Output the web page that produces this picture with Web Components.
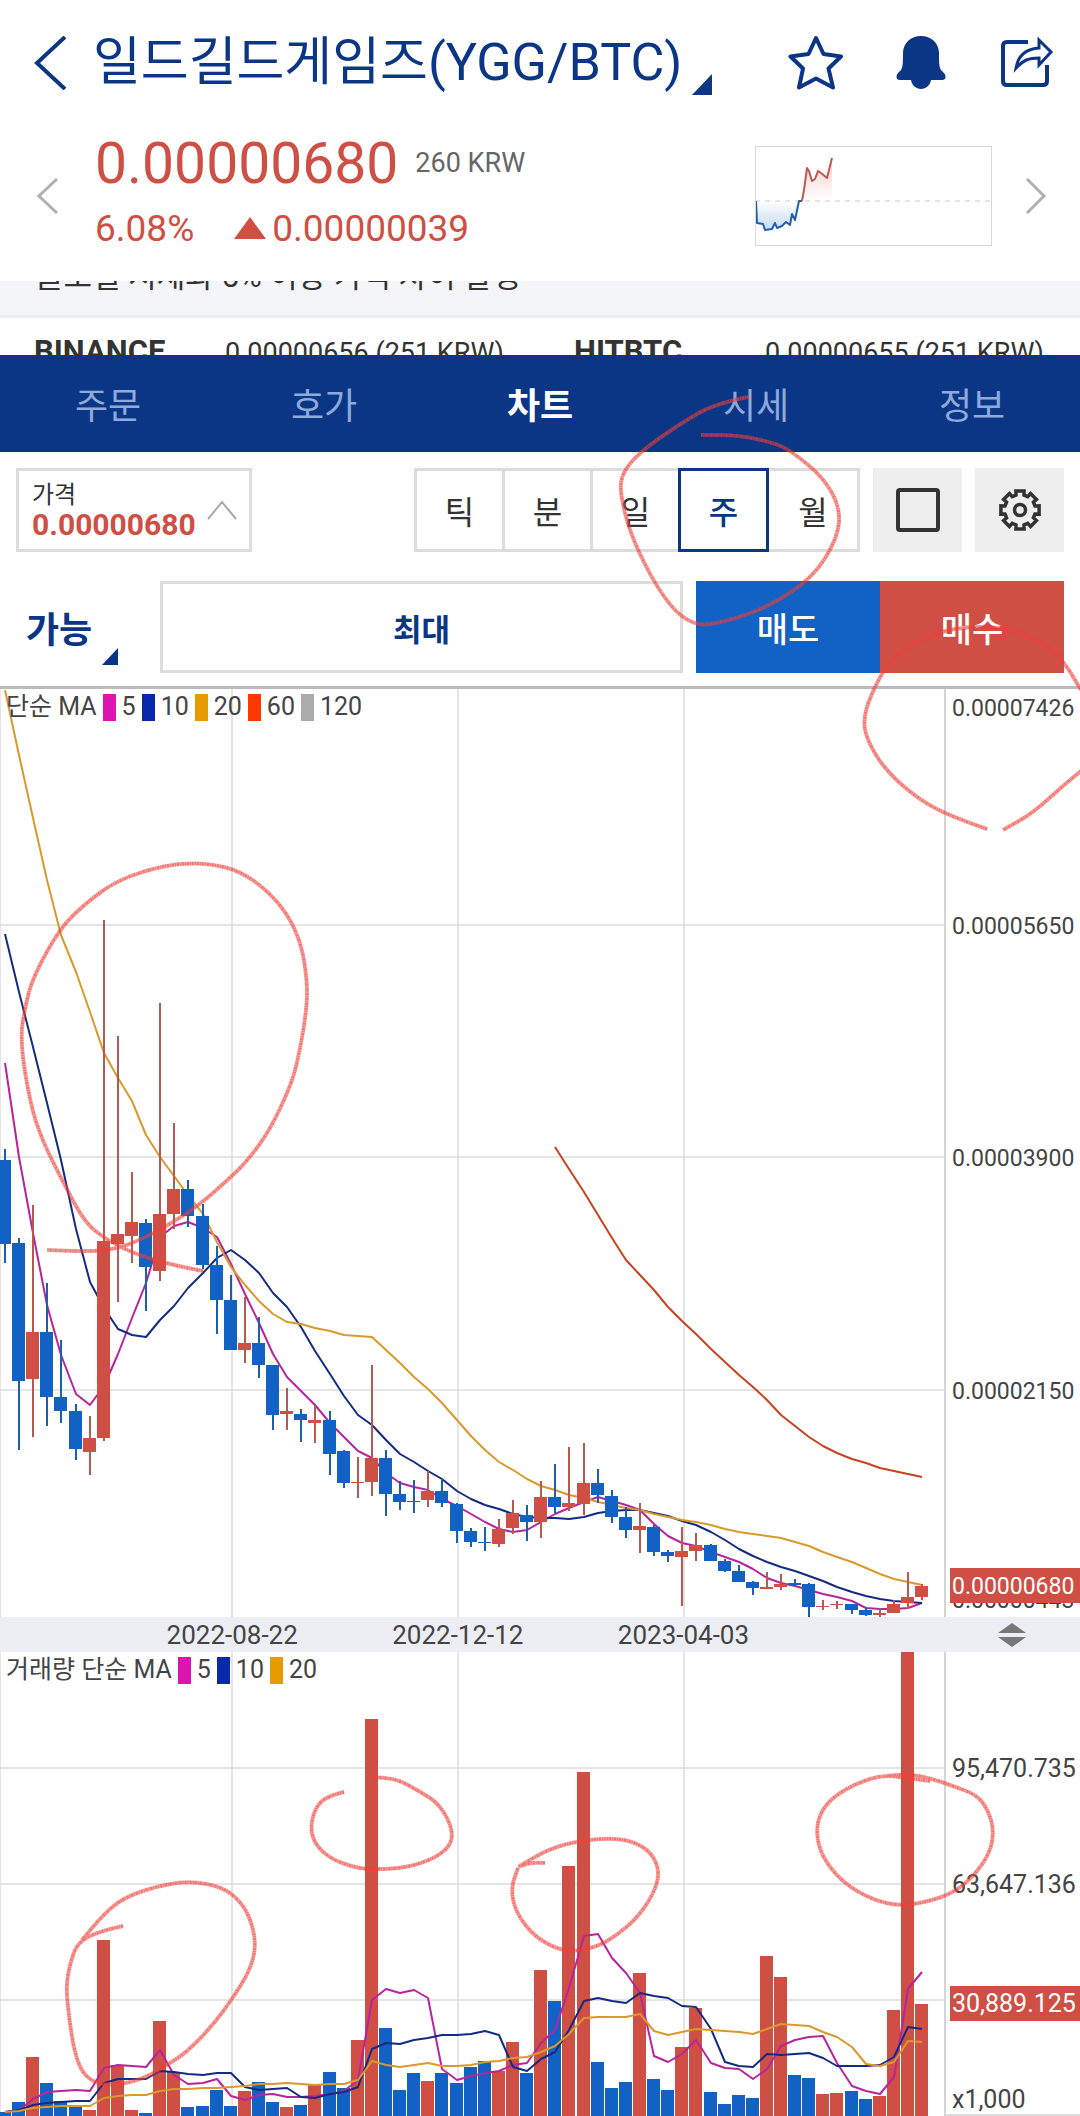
<!DOCTYPE html>
<html lang="ko">
<head>
<meta charset="UTF-8">
<meta name="viewport" content="width=device-width, initial-scale=1.0">
<title>일드길드게임즈(YGG/BTC)</title>
<style>
    body {
        margin: 0;
        background-color: white;
        color: #333;
        font-family: Roboto, "Noto Sans CJK KR", sans-serif;
    }
</style>
</head>
<body>
<coin-page>
    <coin-header>일드길드게임즈(YGG/BTC)</coin-header>
    <price-summary>
        <span slot="price">0.00000680</span>
        <span slot="krw">260 KRW</span>
        <span slot="rate">6.08%</span>
        <span slot="change">0.00000039</span>
    </price-summary>
    <market-strip>
        <span slot="notice">글로벌 시세와 5% 이상 가격 차이 발생</span>
        <market-quote name="BINANCE">0.00000656 (251 KRW)</market-quote>
        <market-quote name="HITBTC">0.00000655 (251 KRW)</market-quote>
    </market-strip>
    <tab-bar>
        <tab-link href="#order">주문</tab-link>
        <tab-link href="#book">호가</tab-link>
        <tab-link href="#chart" active>차트</tab-link>
        <tab-link href="#quote">시세</tab-link>
        <tab-link href="#info">정보</tab-link>
    </tab-bar>
    <chart-toolbar></chart-toolbar>
    <order-bar></order-bar>
    <price-chart></price-chart>
    <date-axis></date-axis>
    <volume-chart></volume-chart>
    <pen-marks></pen-marks>
</coin-page>

<script>
const UP = "#cf4f45";
const DOWN = "#1261c4";
const NAVY = "#0a3685";
const MA5 = "#b8249e";
const MA10 = "#142b82";
const MA20 = "#d99a2b";
const MA60 = "#c9431f";

const BASE_STYLE = `
    * {
        margin: 0;
        padding: 0;
        box-sizing: border-box;
    }

    :host {
        display: block;
    }

    button {
        border: 0;
        background: none;
        color: inherit;
        font: inherit;
        cursor: pointer;
    }

    svg {
        display: block;
    }
`;

function render(element, style, html) {
    element.attachShadow({ mode: "open" });
    element.shadowRoot.innerHTML = `<style>${BASE_STYLE}${style}</style>${html}`;
}

// direction, body top, body bottom, high, low
const candles = [
    ["d", 471, 555, 460, 574], ["d", 554, 692, 549, 761], ["u", 643, 690, 516, 748], ["d", 643, 708, 594, 737],
    ["d", 708, 722, 651, 734], ["d", 722, 760, 715, 771], ["u", 749, 763, 727, 786], ["u", 552, 749, 231, 752],
    ["u", 545, 555, 347, 613], ["u", 533, 547, 483, 574], ["d", 534, 578, 530, 622], ["u", 525, 582, 314, 592],
    ["u", 500, 525, 434, 540], ["d", 500, 527, 491, 538], ["d", 527, 576, 515, 580], ["d", 576, 611, 557, 645],
    ["d", 611, 661, 586, 661], ["u", 654, 661, 608, 674], ["d", 654, 676, 628, 689], ["d", 676, 726, 676, 741],
    ["u", 722, 725, 699, 741], ["d", 725, 731, 720, 753], ["u", 731, 734, 716, 754], ["d", 731, 765, 722, 786],
    ["d", 762, 794, 761, 799], ["u", 793, 794, 768, 809], ["u", 769, 793, 676, 807], ["d", 769, 805, 761, 827],
    ["d", 805, 813, 792, 821], ["d", 812, 813, 791, 824], ["u", 802, 811, 782, 818], ["d", 802, 814, 790, 818],
    ["d", 815, 842, 814, 854], ["d", 842, 853, 839, 858], ["d", 853, 854, 838, 862], ["u", 840, 855, 830, 858],
    ["u", 824, 839, 811, 845], ["d", 826, 833, 816, 852], ["u", 808, 833, 792, 849], ["d", 808, 818, 775, 824],
    ["u", 814, 818, 758, 822], ["u", 794, 815, 754, 826], ["d", 794, 806, 780, 814], ["d", 807, 828, 801, 834],
    ["d", 828, 841, 818, 849], ["u", 837, 841, 814, 864], ["d", 838, 863, 836, 867], ["d", 863, 867, 861, 873],
    ["u", 862, 868, 838, 917], ["u", 856, 862, 844, 872], ["d", 856, 872, 855, 872], ["d", 872, 882, 870, 883],
    ["d", 882, 893, 876, 893], ["d", 893, 899, 892, 906], ["u", 898, 900, 883, 900], ["u", 895, 898, 885, 901],
    ["d", 894, 896, 890, 897], ["d", 895, 918, 894, 928], ["u", 917, 918, 911, 921], ["u", 915, 916, 912, 920],
    ["d", 915, 921, 915, 925], ["d", 921, 926, 918, 927], ["u", 924, 926, 919, 928], ["u", 915, 924, 911, 924],
    ["u", 908, 914, 883, 920], ["u", 897, 908, 895, 911]
];

const volumes = [
    460, 450, 405, 431, 449, 455, 458, 288, 413, 458, 461, 369, 420, 455, 454, 438, 454, 439, 430, 450, 455, 453,
    433, 420, 436, 388, 67, 376, 438, 421, 429, 421, 431, 415, 409, 419, 390, 421, 318, 349, 214, 120, 410, 436,
    430, 321, 427, 438, 395, 356, 440, 452, 443, 446, 304, 325, 423, 426, 442, 441, 439, 447, 444, 358, 0, 352
];

const priceMa5 = [
    374, 468, 544, 616, 666, 705, 716, 697, 665, 629, 594, 548, 537, 533, 539, 548, 575, 605, 634, 665, 688, 702,
    716, 734, 748, 762, 769, 784, 794, 798, 801, 810, 817, 825, 833, 840, 843, 841, 833, 825, 819, 813, 808, 812,
    816, 821, 835, 847, 854, 857, 863, 868, 873, 880, 889, 894, 897, 901, 905, 908, 912, 919, 920, 920, 919, 914
];

const priceMa10 = [
    245, 303, 358, 414, 471, 540, 593, 619, 640, 646, 648, 631, 617, 599, 584, 569, 561, 571, 584, 604, 618, 638,
    662, 685, 707, 726, 736, 751, 765, 773, 782, 790, 802, 810, 816, 820, 825, 828, 829, 829, 830, 828, 824, 822,
    821, 821, 824, 827, 832, 836, 843, 851, 860, 867, 873, 878, 882, 887, 892, 898, 903, 907, 910, 912, 913, 914
];

const priceMa20 = [
    1, 66, 129, 191, 246, 283, 323, 364, 389, 412, 446, 468, 487, 506, 525, 553, 578, 596, 612, 625, 633, 635,
    639, 642, 646, 647, 648, 661, 674, 688, 700, 714, 731, 747, 761, 773, 781, 790, 797, 801, 806, 809, 813, 816,
    819, 821, 825, 828, 831, 833, 836, 840, 843, 845, 847, 849, 853, 857, 863, 868, 873, 879, 885, 890, 893, 896
];

// starts at the 40th week
const priceMa60 = [
    458, 480, 503, 526, 549, 571, 586, 601, 618, 632, 645, 660, 673, 686, 698, 711, 726, 737, 748, 757, 764, 770,
    774, 779, 782, 785, 788
];

const volumeMa5 = [
    460, 458, 447, 440, 439, 438, 439, 416, 413, 414, 415, 398, 423, 432, 431, 427, 444, 448, 443, 442, 445, 445,
    444, 442, 439, 428, 348, 337, 341, 338, 346, 417, 428, 424, 421, 419, 413, 411, 391, 378, 336, 284, 282, 306,
    321, 341, 404, 410, 402, 388, 411, 416, 417, 427, 417, 394, 388, 385, 384, 411, 434, 439, 442, 425, 337, 320
];

const volumeMa10 = [
    460, 458, 453, 451, 450, 449, 449, 431, 427, 427, 427, 419, 420, 422, 423, 421, 421, 435, 438, 437, 436, 445,
    446, 442, 440, 435, 397, 391, 392, 388, 386, 383, 383, 382, 379, 383, 415, 419, 407, 400, 378, 349, 346, 349,
    351, 341, 344, 346, 354, 355, 377, 410, 414, 415, 402, 403, 402, 401, 406, 414, 414, 414, 413, 405, 375, 377
];

const volumeMa20 = [
    460, 459, 456, 455, 454, 454, 454, 446, 444, 443, 443, 439, 437, 437, 436, 436, 435, 434, 432, 432, 431, 432,
    433, 432, 432, 428, 409, 413, 415, 413, 411, 414, 414, 413, 410, 409, 406, 405, 400, 394, 382, 366, 365, 365,
    365, 362, 379, 383, 380, 377, 378, 379, 380, 382, 377, 372, 373, 374, 380, 385, 395, 412, 414, 410, 389, 390
];

const STEP = 14.11;
const weekX = (index) => Math.round(5 + index * STEP);

function line(values, color, start = 0) {
    const points = values.map((y, i) => `${weekX(i + start)},${y}`).join(" ");
    return `<polyline points="${points}" fill="none" stroke="${color}" stroke-width="2" stroke-linejoin="round"/>`;
}

function grid(height, rows) {
    const columns = [232, 458, 684].map((x) => `<path d="M${x} 0V${height}"/>`).join("");
    const lines = rows.map((y) => `<path d="M0 ${y}H944"/>`).join("");
    return `<g stroke="#dcdcdc" stroke-width="1.5"><path d="M0 0V${height}"/>${columns}${lines}</g>`;
}

class CoinPage extends HTMLElement {
    constructor() {
        super();
        render(this, `
            :host {
                position: relative;
                overflow: hidden;
            }
        `, `<main><slot></slot></main>`);
    }
}

class CoinHeader extends HTMLElement {
    constructor() {
        super();
        render(this, `
            header {
                display: flex;
                align-items: center;
                height: 126px;
                padding: 0 26px 0 34px;
                color: ${NAVY};
            }

            .title {
                display: flex;
                align-items: center;
                gap: 10px;
                margin-left: 27px;
                white-space: nowrap;
            }

            h1 {
                font-size: 52px;
                font-weight: 400;
                line-height: 64px;
            }

            .corner {
                align-self: flex-end;
            }

            .icons {
                display: flex;
                gap: 49px;
                margin-left: auto;
            }
        `, `
            <header>
                <button aria-label="뒤로">
                    <svg width="32" height="54" viewBox="0 0 32 54"><path d="M31 1L3 27L31 53" fill="none" stroke="${NAVY}" stroke-width="4"/></svg>
                </button>
                <button class="title">
                    <h1><slot></slot></h1>
                    <svg class="corner" width="20" height="21"><path d="M20 0V21H0Z" fill="${NAVY}"/></svg>
                </button>
                <div class="icons">
                    <button aria-label="관심">
                        <svg width="56" height="56" viewBox="0 0 56 56"><path d="M28 3L35.500 19L53 21.500L40.500 33.500L45 52.500L28 43.500L11 52.500L15 33.500L2.500 21.500L20.500 19Z" fill="none" stroke="${NAVY}" stroke-width="4" stroke-linejoin="round"/></svg>
                    </button>
                    <button aria-label="알림">
                        <svg width="56" height="56" viewBox="0 0 56 56"><path d="M28 1C38 1 46 8 46 18C46 26 46 32 48 35C51 38 52.500 39 52.500 42Q52.500 45 49 45H38C37 50.500 33 54 28 54S19 50.500 18 45H7Q3.500 45 3.500 42C3.500 39 5 38 8 35C10 32 10 26 10 18C10 8 18 1 28 1Z" fill="${NAVY}"/></svg>
                    </button>
                    <button aria-label="공유">
                        <svg width="56" height="56" viewBox="0 0 56 56" fill="none" stroke="${NAVY}" stroke-width="4"><path d="M30 7H9Q5 7 5 11V46Q5 50 9 50H45Q49 50 49 46V30"/><path d="M41 5V13C28 14 20 21 18 33C25 25 31 23 41 23V30L53 17Z" stroke-width="3"/></svg>
                    </button>
                </div>
            </header>
        `);
    }
}

class PriceSummary extends HTMLElement {
    constructor() {
        super();
        render(this, `
            section {
                display: flex;
                align-items: center;
                height: 155px;
                padding: 0 34px 16px 36px;
                color: ${UP};
            }

            .values {
                margin-left: 37px;
            }

            .row {
                display: flex;
                align-items: center;
                height: 65px;
                font-size: 37px;
                white-space: nowrap;
            }

            .price {
                margin-right: 17px;
                font-size: 57px;
                font-weight: 400;
            }

            .krw {
                color: #666;
                font-size: 27px;
            }

            .rate {
                margin-right: 40px;
            }

            .arrow {
                margin-right: 6px;
            }

            .mini {
                margin: 0 34px 0 auto;
            }
        `, `
            <section>
                <button aria-label="이전"><svg width="22" height="36"><path d="M21 1L3 18L21 35" fill="none" stroke="#b0b0b0" stroke-width="3"/></svg></button>
                <div class="values">
                    <div class="row">
                        <strong class="price"><slot name="price"></slot></strong>
                        <span class="krw"><slot name="krw"></slot></span>
                    </div>
                    <div class="row">
                        <span class="rate"><slot name="rate"></slot></span>
                        <svg class="arrow" width="32" height="22"><path d="M16 0L32 22H0Z" fill="${UP}"/></svg>
                        <span><slot name="change"></slot></span>
                    </div>
                </div>
                <svg class="mini" width="237" height="100">
                    <defs>
                        <linearGradient id="rise" x2="0" y2="1"><stop stop-color="#f6cfcb"/><stop offset="1" stop-color="#fff"/></linearGradient>
                        <linearGradient id="fall" x2="0" y2="1"><stop stop-color="#fff"/><stop offset="1" stop-color="#c5daf2"/></linearGradient>
                    </defs>
                    <path d="M1 55L2 77L8 78L10 84L17 83L20 77L22 82L27 80L31 76L35 79L37 68L40 74L44 55Z" fill="url(#fall)"/>
                    <path d="M47 55L49 44L52 22L54 25L57 35L60 33L63 25L66 27L72 32L77 12V55Z" fill="url(#rise)"/>
                    <path d="M0 55H237" stroke="#e4e4e4" stroke-width="2" stroke-dasharray="5 5"/>
                    <path d="M1 55L2 77L8 78L10 84L17 83L20 77L22 82L27 80L31 76L35 79L37 68L40 74L44 55L47 55" fill="none" stroke="#1f5fae" stroke-width="2" stroke-linejoin="round"/>
                    <path d="M47 55L49 44L52 22L54 25L57 35L60 33L63 25L66 27L72 32L77 12" fill="none" stroke="#bf5850" stroke-width="2" stroke-linejoin="round"/>
                    <rect x="0.500" y="0.500" width="236" height="99" fill="none" stroke="#d8d8d8"/>
                </svg>
                <button aria-label="다음"><svg width="20" height="36"><path d="M1 1L18 18L1 35" fill="none" stroke="#b0b0b0" stroke-width="3"/></svg></button>
            </section>
        `);
    }
}

class MarketStrip extends HTMLElement {
    constructor() {
        super();
        render(this, `
            .notice {
                display: flex;
                align-items: flex-end;
                height: 37px;
                padding: 0 35px 20px;
                overflow: hidden;
                border-bottom: 3px solid #ececec;
                background-color: #f4f5f9;
                font-size: 31px;
                line-height: 36px;
                white-space: nowrap;
            }

            .quotes {
                display: grid;
                grid-template-columns: 1fr 1fr;
                height: 37px;
                overflow: hidden;
            }
        `, `
            <p class="notice"><slot name="notice"></slot></p>
            <div class="quotes"><slot></slot></div>
        `);
    }
}

class MarketQuote extends HTMLElement {
    constructor() {
        super();
        render(this, `
            div {
                display: flex;
                align-items: baseline;
                justify-content: space-between;
                padding: 16px 36px 0 34px;
                line-height: 36px;
                white-space: nowrap;
            }

            b {
                font-size: 31px;
            }

            span {
                font-size: 27px;
            }
        `, `<div><b>${this.getAttribute("name")}</b><span><slot></slot></span></div>`);
    }
}

class TabBar extends HTMLElement {
    constructor() {
        super();
        render(this, `
            nav {
                display: grid;
                grid-template-columns: repeat(5, 1fr);
                background-color: ${NAVY};
            }
        `, `<nav><slot></slot></nav>`);
    }
}

class TabLink extends HTMLElement {
    constructor() {
        super();
        render(this, `
            a {
                display: block;
                padding-top: 7px;
                color: #8ea9da;
                font-size: 36px;
                line-height: 90px;
                text-align: center;
                text-decoration: none;
            }

            :host([active]) a {
                color: white;
                font-weight: 700;
            }
        `, `<a href="${this.getAttribute("href")}"><slot></slot></a>`);
    }
}

class ChartToolbar extends HTMLElement {
    constructor() {
        super();
        const periods = ["틱", "분", "일", "주", "월"];
        render(this, `
            .bar {
                display: flex;
                gap: 13px;
                height: 100px;
                padding: 16px 16px 0;
            }

            .price {
                display: flex;
                align-items: center;
                justify-content: space-between;
                width: 236px;
                margin-right: auto;
                padding: 0 12px 0 13px;
                border: 3px solid #dcdcdc;
                text-align: left;
                white-space: nowrap;
            }

            .price span, .price b {
                display: block;
                font-size: 24px;
                line-height: 30px;
            }

            .price b {
                color: ${UP};
                font-size: 30px;
            }

            .periods {
                display: flex;
                border: 3px solid #dcdcdc;
            }

            .periods button {
                width: 88px;
                border-right: 3px solid #dcdcdc;
                font-size: 32px;
            }

            .periods button:last-child {
                border-right: 0;
            }

            .periods .selected {
                margin: -3px 0 -3px -3px;
                width: 91px;
                border: 3px solid ${NAVY};
                color: ${NAVY};
                font-weight: 500;
            }

            .tool {
                display: grid;
                place-items: center;
                width: 89px;
                background-color: #eee;
            }
        `, `
            <div class="bar">
                <button class="price">
                    <div><span>가격</span><b>0.00000680</b></div>
                    <svg width="30" height="20"><path d="M1 19L15 2L29 19" fill="none" stroke="#aaa" stroke-width="2"/></svg>
                </button>
                <div class="periods">
                    ${periods.map((name) => `<button class="${name === "주" ? "selected" : ""}">${name}</button>`).join("")}
                </div>
                <button class="tool" aria-label="전체 화면">
                    <svg width="44" height="44"><rect x="2" y="2" width="40" height="40" rx="2" fill="none" stroke="#333" stroke-width="4"/></svg>
                </button>
                <button class="tool" aria-label="설정">
                    <svg width="44" height="44" viewBox="-22 -22 44 44" fill="none" stroke="#333" stroke-width="3.500"><path d="${this.gear()}"/><circle r="5.500"/></svg>
                </button>
            </div>
        `);
    }

    gear() {
        const points = [];
        for (let tooth = 0; tooth < 8; tooth++) {
            for (const [radius, offset] of [[15.5, -15], [19.5, -12], [19.5, 12], [15.5, 15]]) {
                const angle = (tooth * 45 + offset) * Math.PI / 180;
                points.push(`${(radius * Math.sin(angle)).toFixed(1)} ${(-radius * Math.cos(angle)).toFixed(1)}`);
            }
        }
        return `M${points.join("L")}Z`;
    }
}

class OrderBar extends HTMLElement {
    constructor() {
        super();
        render(this, `
            .bar {
                display: flex;
                height: 134px;
                padding: 29px 16px 13px;
                font-size: 34px;
            }

            .available {
                display: flex;
                align-items: center;
                gap: 10px;
                width: 144px;
                padding-left: 10px;
                color: ${NAVY};
                font-size: 36px;
                font-weight: 700;
            }

            .available svg {
                align-self: flex-end;
                margin-bottom: 8px;
            }

            .max {
                flex: 1;
                margin-right: 13px;
                border: 3px solid #dcdcdc;
                color: ${NAVY};
                font-size: 31px;
                font-weight: 700;
            }

            .sell, .buy {
                width: 184px;
                background-color: ${DOWN};
                color: white;
                font-weight: 500;
            }

            .buy {
                background-color: ${UP};
            }
        `, `
            <div class="bar">
                <button class="available">가능<svg width="16" height="17"><path d="M16 0V17H0Z" fill="${NAVY}"/></svg></button>
                <button class="max">최대</button>
                <button class="sell">매도</button>
                <button class="buy">매수</button>
            </div>
        `);
    }
}

class MaLegend extends HTMLElement {
    constructor() {
        super();
        const items = this.getAttribute("items").split(",").map((item) => item.split(":"));
        render(this, `
            :host {
                position: absolute;
                top: 2px;
                left: 6px;
            }

            div {
                display: flex;
                align-items: center;
                gap: 6px;
                color: #444;
                font-size: 25px;
                line-height: 32px;
                white-space: nowrap;
            }

            i {
                width: 13px;
                height: 27px;
            }
        `, `<div><slot></slot>${items.map(([period, color]) => `<i style="background-color: ${color}"></i><span>${period}</span>`).join("")}</div>`);
    }
}

const CHART_STYLE = `
    .chart {
        position: relative;
        display: grid;
        grid-template-columns: 1fr 136px;
    }

    .plot {
        width: 100%;
    }

    .axis {
        border-left: 2px solid #d4d4d4;
        fill: #444;
    }

    .tag {
        fill: white;
    }
`;

class PriceChart extends HTMLElement {
    constructor() {
        super();
        const bodies = candles.map(([direction, top, bottom, high, low], i) => {
            const x = weekX(i);
            return `<g fill="${direction === "u" ? UP : DOWN}"><path d="M${x - 1} ${high}h2V${low}h-2Z" fill="${direction === "u" ? "#b45a52" : "#1b5fae"}"/><path d="M${x - 7} ${top}h13V${bottom}h-13Z"/></g>`;
        }).join("");
        render(this, `
            ${CHART_STYLE}
            .chart {
                border-top: 3px solid #bbb;
            }
        `, `
            <div class="chart">
                <svg class="plot" height="928" viewBox="0 0 944 928" preserveAspectRatio="none">
                    ${grid(928, [236, 468, 701])}
                    ${line(priceMa60, MA60, 39)}
                    ${line(priceMa5, MA5)}
                    ${line(priceMa10, MA10)}
                    ${line(priceMa20, MA20)}
                    ${bodies}
                </svg>
                <svg class="axis" width="136" height="928" font-size="23">
                    <text x="6" y="27">0.00007426</text>
                    <text x="6" y="245">0.00005650</text>
                    <text x="6" y="477">0.00003900</text>
                    <text x="6" y="710">0.00002150</text>
                    <text x="6" y="919">0.00000443</text>
                    <rect x="4" y="879" width="132" height="35" fill="${UP}"/>
                    <text class="tag" x="6" y="905">0.00000680</text>
                </svg>
                <ma-legend items="5:#dc14b0,10:#0a28aa,20:#e69b00,60:#ff3700,120:#aaa">단순 MA</ma-legend>
            </div>
        `);
    }
}

class DateAxis extends HTMLElement {
    constructor() {
        super();
        render(this, `
            div {
                display: grid;
                grid-template-columns: 1fr 136px;
                height: 35px;
                background-color: #edeef4;
            }

            .dates {
                width: 100%;
                fill: #444;
            }

            button {
                display: grid;
                place-items: center;
            }
        `, `
            <div>
                <svg class="dates" height="35" font-size="26" text-anchor="middle">
                    <text x="24.600%" y="27">2022-08-22</text>
                    <text x="48.500%" y="27">2022-12-12</text>
                    <text x="72.400%" y="27">2023-04-03</text>
                </svg>
                <button aria-label="차트 크기 조절"><svg width="28" height="24"><path d="M14 0L28 10H0ZM0 14H28L14 24Z" fill="#777"/></svg></button>
            </div>
        `);
    }
}

class VolumeChart extends HTMLElement {
    constructor() {
        super();
        const bars = volumes.map((top, i) => `<path d="M${weekX(i) - 7} ${top}h13V464h-13Z" fill="${candles[i][0] === "u" ? UP : DOWN}"/>`).join("");
        render(this, CHART_STYLE, `
            <div class="chart">
                <svg class="plot" height="464" viewBox="0 0 944 464" preserveAspectRatio="none">
                    ${grid(464, [116, 232, 348])}
                    ${bars}
                    ${line(volumeMa5, MA5)}
                    ${line(volumeMa10, MA10)}
                    ${line(volumeMa20, MA20)}
                </svg>
                <svg class="axis" width="136" height="464" font-size="25">
                    <text x="6" y="125">95,470.735</text>
                    <text x="6" y="241">63,647.136</text>
                    <rect x="4" y="334" width="132" height="35" fill="${UP}"/>
                    <text class="tag" x="6" y="360">30,889.125</text>
                    <text x="6" y="456">x1,000</text>
                    <path d="M0 463H134" stroke="#dcdcdc" stroke-width="2"/>
                </svg>
                <ma-legend items="5:#dc14b0,10:#0a28aa,20:#e69b00">거래량 단순 MA</ma-legend>
            </div>
        `);
    }
}

// Freehand pen strokes kept above the page
class PenMarks extends HTMLElement {
    constructor() {
        super();
        const strokes = [
            "749,397 716,403 678,425 640,452 622,473 620,493 630,533 651,577 671,607 689,622 709,626 763,610 813,578 838,537 840,507 823,477 790,450 771,442 737,435 701,435",
            "987,829 952,817 918,799 884,769 865,736 864,715 873,690 888,663 913,643 943,631 967,627 993,627 1013,630 1043,643 1063,660 1081,690",
            "1081,771 1066,783 1033,813 1003,830",
            "203,1271 167,1264 133,1253 107,1240 85,1223 63,1182 42,1140 30,1103 20,1040 25,1007 33,977 60,928 87,902 115,882 147,870 180,863 213,864 242,872 270,893 290,918 302,947 307,980 307,1007 300,1050 292,1083 270,1130 248,1160 230,1178 197,1207 160,1230 133,1243 117,1248 100,1251 73,1251 47,1250",
            "123,1926 100,1931 78,1942 70,1963 66,1987 69,2017 74,2050 82,2073 97,2084 117,2085 143,2079 167,2065 187,2052 213,2025 233,1998 250,1970 256,1947 252,1923 242,1903 223,1887 190,1881 157,1886 123,1898 103,1915 82,1940",
            "344,1792 327,1796 315,1808 310,1830 317,1847 333,1860 357,1868 370,1869 397,1869 423,1863 443,1853 453,1840 450,1822 437,1802 417,1790 397,1779 373,1777",
            "545,1863 532,1862 518,1867 523,1864 547,1850 573,1842 607,1838 633,1841 652,1853 660,1873 653,1895 637,1918 617,1935 597,1947 570,1952 550,1946 530,1932 515,1910 511,1888 518,1868",
            "930,1781 907,1778 883,1775 857,1783 833,1797 820,1813 816,1833 822,1857 843,1883 873,1900 900,1906 927,1902 953,1893 973,1877 990,1853 994,1830 988,1810 977,1795 953,1786 930,1778 907,1774 887,1776"
        ];
        const paths = strokes.map((stroke) => `<path d="${this.smooth(stroke)}"/>`).join("");
        render(this, `
            :host {
                position: absolute;
                inset: 0;
                pointer-events: none;
            }

            svg {
                width: 100%;
                height: 100%;
            }
        `, `
            <svg viewBox="0 0 1080 2116" preserveAspectRatio="none" fill="none" stroke="#ee403a" stroke-linejoin="round">
                <g stroke-width="4" opacity="0.450">${paths}</g>
                <g stroke-width="3" opacity="0.500" stroke-dasharray="2 1 1 1">${paths}</g>
            </svg>
        `);
    }

    // Joins the points through their midpoints so that the curve has no corners
    smooth(stroke) {
        const points = stroke.split(" ").map((point) => point.split(",").map(Number));
        let path = `M${points[0]}`;
        for (let i = 1; i < points.length - 1; i++) {
            const [x, y] = points[i];
            const [nextX, nextY] = points[i + 1];
            path += `Q${x} ${y} ${(x + nextX) / 2} ${(y + nextY) / 2}`;
        }
        return `${path}L${points[points.length - 1]}`;
    }
}

customElements.define("coin-page", CoinPage);
customElements.define("coin-header", CoinHeader);
customElements.define("price-summary", PriceSummary);
customElements.define("market-strip", MarketStrip);
customElements.define("market-quote", MarketQuote);
customElements.define("tab-bar", TabBar);
customElements.define("tab-link", TabLink);
customElements.define("chart-toolbar", ChartToolbar);
customElements.define("order-bar", OrderBar);
customElements.define("ma-legend", MaLegend);
customElements.define("price-chart", PriceChart);
customElements.define("date-axis", DateAxis);
customElements.define("volume-chart", VolumeChart);
customElements.define("pen-marks", PenMarks);
</script>
</body>
</html>
